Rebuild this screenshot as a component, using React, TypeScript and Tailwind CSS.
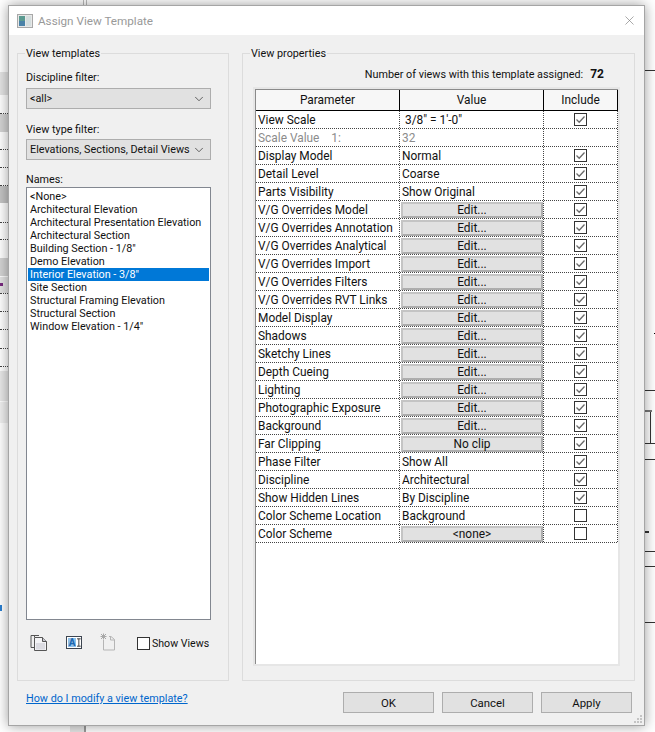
import { ChevronDown, X } from "lucide-react";

const templates = [
  "<None>",
  "Architectural Elevation",
  "Architectural Presentation Elevation",
  "Architectural Section",
  'Building Section - 1/8"',
  "Demo Elevation",
  'Interior Elevation - 3/8"',
  "Site Section",
  "Structural Framing Elevation",
  "Structural Section",
  'Window Elevation - 1/4"',
];

type Row = { name: string; value: string; kind?: "button" | "muted"; on?: boolean; noBox?: boolean };

const rows: Row[] = [
  { name: "View Scale", value: " 3/8\" = 1'-0\"", on: true },
  { name: "Scale Value    1:", value: "32", kind: "muted", noBox: true },
  { name: "Display Model", value: "Normal", on: true },
  { name: "Detail Level", value: "Coarse", on: true },
  { name: "Parts Visibility", value: "Show Original", on: true },
  { name: "V/G Overrides Model", value: "Edit...", kind: "button", on: true },
  { name: "V/G Overrides Annotation", value: "Edit...", kind: "button", on: true },
  { name: "V/G Overrides Analytical", value: "Edit...", kind: "button", on: true },
  { name: "V/G Overrides Import", value: "Edit...", kind: "button", on: true },
  { name: "V/G Overrides Filters", value: "Edit...", kind: "button", on: true },
  { name: "V/G Overrides RVT Links", value: "Edit...", kind: "button", on: true },
  { name: "Model Display", value: "Edit...", kind: "button", on: true },
  { name: "Shadows", value: "Edit...", kind: "button", on: true },
  { name: "Sketchy Lines", value: "Edit...", kind: "button", on: true },
  { name: "Depth Cueing", value: "Edit...", kind: "button", on: true },
  { name: "Lighting", value: "Edit...", kind: "button", on: true },
  { name: "Photographic Exposure", value: "Edit...", kind: "button", on: true },
  { name: "Background", value: "Edit...", kind: "button", on: true },
  { name: "Far Clipping", value: "No clip", kind: "button", on: true },
  { name: "Phase Filter", value: "Show All", on: true },
  { name: "Discipline", value: "Architectural", on: true },
  { name: "Show Hidden Lines", value: "By Discipline", on: true },
  { name: "Color Scheme Location", value: "Background", on: false },
  { name: "Color Scheme", value: "<none>", kind: "button", on: false },
];

const leftBands = [
  { top: 72, h: 23, cls: "bg-[#e4e4e4]" },
  { top: 114, h: 18, cls: "bg-[#d4d4d4]" },
  { top: 186, h: 17, cls: "bg-[#c4c4c4]" },
  { top: 258, h: 18, cls: "bg-[#d4d4d4]" },
  { top: 277, h: 16, cls: "bg-[#e4e4e4]" },
  { top: 371, h: 30, cls: "bg-[#e8e8e8]" },
  { top: 402, h: 21, cls: "bg-[#f0f0f0]" },
];
const leftDots = [113, 149, 167, 185, 222, 239, 293, 311, 329, 348, 366];
const rightLines = [70, 390, 443, 459, 551, 566, 622];

const CheckBox = ({ on }: { on?: boolean }) => (
  <span className="w-[13px] h-[13px] border border-[#333333] bg-white flex items-center justify-center">
    {on && (
      <svg width="11" height="11" viewBox="0 0 11 11" fill="none">
        <path d="M1.5 5.5 L4.2 8.2 L9.5 2.5" stroke="#6a6a6a" strokeWidth="1.3" />
      </svg>
    )}
  </span>
);

const Combo = ({ label }: { label: string }) => (
  <div className="w-[185px] h-[21px] bg-[#e1e1e1] border border-[#adadad] flex items-center justify-between pl-[3px] pr-[4px] whitespace-nowrap">
    <span>{label}</span>
    <ChevronDown size={14} strokeWidth={1.4} className="text-[#444444] shrink-0" />
  </div>
);

const TitleIcon = () => (
  <svg width="16" height="14" viewBox="0 0 16 14">
    <rect x="0.5" y="0.5" width="15" height="13" fill="#e8e8e8" stroke="#a8a8a8" />
    <rect x="2" y="2" width="6" height="10" fill="#5a9a90" />
    <rect x="2" y="7" width="6" height="5" fill="#4a82a8" />
    <rect x="9" y="2" width="5" height="10" fill="#d4dede" />
  </svg>
);

const CopyIcon = () => (
  <svg width="18" height="17" viewBox="0 0 18 17" fill="none">
    <path d="M5 1.5 H1 V13.5 H4" stroke="#555555" />
    <path d="M5 1.5 H9 M4.5 1 V3" stroke="#555555" />
    <path d="M4.5 3.5 H12.5 L16.5 7.5 V16.5 H4.5 Z" fill="#f4f4f6" stroke="#555555" />
    <path d="M12.5 3.5 V7.5 H16.5" fill="#c8c8d0" stroke="#555555" />
    <rect x="6" y="9" width="9" height="6.5" fill="#dcdce2" />
  </svg>
);

const RenameIcon = () => (
  <span className="w-[16px] h-[13px] border border-[#3c4450] bg-white flex items-stretch pl-px py-px">
    <span className="w-[9px] bg-[#8fc0e8] text-[#1c66b0] font-bold text-[10px] leading-[10px] text-center">A</span>
    <svg width="4" height="9" viewBox="0 0 4 9" className="ml-px" fill="none">
      <path d="M0 .5 H4 M2 .5 V8.5 M0 8.5 H4" stroke="#333333" />
    </svg>
  </span>
);

const DeleteIcon = () => (
  <svg width="16" height="18" viewBox="0 0 16 18" fill="none">
    <path d="M3.5 7 V17 H14.5 V6.5 L11 3.5 H9" stroke="#b5b5b5" />
    <path d="M10.5 3.5 V7 H14.5" stroke="#b5b5b5" />
    <path d="M1 1 L6 6 M6 1 L1 6 M3.5 0.5 V6.5 M0.5 3.5 H6.5" stroke="#a8a8a8" strokeWidth="1" />
  </svg>
);

const DialogButton = ({ label }: { label: string }) => (
  <button className="w-[91px] h-[21px] bg-[#e1e1e1] border border-[#adadad] flex items-center justify-center pt-px text-[11.4px]">
    {label}
  </button>
);

export default function App() {
  return (
    <div className="relative w-[655px] h-[732px] overflow-hidden bg-white pt-[5px] pl-[8px] text-[10.8px] leading-[13px] text-[#111111] font-['Roboto',sans-serif]">
      {/* revit drawing behind the dialog */}
      {leftBands.map((b) => (
        <div key={b.top} className={`absolute left-0 w-[8px] ${b.cls}`} style={{ top: b.top, height: b.h }} />
      ))}
      {leftDots.map((y) => (
        <div key={y} className="absolute left-0 w-[8px] border-t border-dotted border-[#444444]" style={{ top: y }} />
      ))}
      <div className="absolute left-0 top-[283px] w-[3px] h-[3px] bg-[#7a2a80]" />
      <div className="absolute left-0 top-[605px] w-[2px] h-[6px] bg-[#2a7fd0]" />
      {rightLines.map((y) => (
        <div key={y} className="absolute left-[645px] right-0 border-t border-[#333333]" style={{ top: y }} />
      ))}
      <div className="absolute left-[654px] top-[333px] w-px h-px bg-black" />
      <div className="absolute left-[645px] top-[410px] w-[7px] h-[2px] border border-[#777777]" />
      <div className="absolute left-[650px] top-[412px] w-px h-[31px] bg-[#333333]" />
      <div className="absolute left-[645px] top-[531px] w-[4px] h-[2px] bg-[#333333]" />
      <div className="absolute left-[83px] top-0 w-[4px] h-[6px] border-x border-[#bbbbbb]" />
      <div className="absolute left-[70px] top-[725px] w-[16px] h-[7px] bg-[#e6e6e6] border-r-2 border-[#9a9a9a]" />

      {/* dialog */}
      <div className="relative w-[637px] h-[721px] border border-[#a5a5a5] bg-[#f0f0f0] shadow-[0_0_12px_rgba(0,0,0,0.4)] flex flex-col">
        <div className="h-[29px] bg-white flex items-center pl-[8px] pr-[7px] shrink-0 text-[#999999] text-[11.7px]">
          <TitleIcon />
          <span className="ml-[5px] flex-1 pt-[2px]">Assign View Template</span>
          <X size={15} strokeWidth={1} className="text-[#777777]" />
        </div>

        <div className="flex pl-[8px] pt-[11px] gap-[13px]">
          {/* left group */}
          <fieldset className="w-[212px] h-[635px] border border-[#dcdcdc] pl-[8px]">
            <legend className="px-px -ml-[1px] pt-px">View templates</legend>
            <div className="mt-[11px]">Discipline filter:</div>
            <div className="mt-[4px]"><Combo label="<all>" /></div>
            <div className="mt-[14px]">View type filter:</div>
            <div className="mt-[3px]"><Combo label="Elevations, Sections, Detail Views" /></div>
            <div className="mt-[13px]">Names:</div>
            <div className="mt-[1px] w-[185px] h-[433px] border border-[#828790] bg-white px-px pt-[2px] flex flex-col">
              {templates.map((t, i) => (
                <div
                  key={t}
                  className={`h-[13px] pl-[2px] whitespace-nowrap ${i === 6 ? "bg-[#0078d7] text-white" : ""}`}
                >
                  {t}
                </div>
              ))}
            </div>
            <div className="mt-[13px] flex items-center">
              <span className="ml-[4px]"><CopyIcon /></span>
              <span className="ml-[18px]"><RenameIcon /></span>
              <span className="ml-[18px]"><DeleteIcon /></span>
              <span className="ml-[21px] mt-[2px] w-[13px] h-[13px] border border-[#333333] bg-white" />
              <span className="ml-[2px] mt-[2px] text-[10.6px]">Show Views</span>
            </div>
          </fieldset>

          {/* right group */}
          <fieldset className="w-[393px] h-[635px] border border-[#dcdcdc] pl-[11px]">
            <legend className="px-px -ml-[4px] pt-px">View properties</legend>
            <div className="mt-[7px] pr-[30px] flex justify-end items-center h-[14px] pt-px">
              <span>Number of views with this template assigned:</span>
              <span className="ml-[7px] font-bold text-[12px]">72</span>
            </div>
            <div className="mt-[7px] w-[365px] h-[577px] bg-white border-l-2 border-t-2 border-[#8a8a8a] outline-2 outline-[#e6e6e6] -outline-offset-1 text-[11.9px]">
              <div className="grid grid-cols-[144px_144px_74px] h-[21px] bg-[#f7f7f7] border-b border-black text-center">
                <div className="border-r border-black flex items-center justify-center pt-px">Parameter</div>
                <div className="border-r border-black flex items-center justify-center pt-px">Value</div>
                <div className="border-r border-black flex items-center justify-center pt-px">Include</div>
              </div>
              {rows.map((r) => (
                <div
                  key={r.name}
                  className={`grid grid-cols-[144px_144px_74px] h-[18px] border-b border-dotted border-[#444444] ${r.kind === "muted" ? "text-[#8c8c8c]" : ""}`}
                >
                  <div className="border-r border-dotted border-[#444444] pl-[2px] pt-px flex items-center whitespace-pre">{r.name}</div>
                  <div className="border-r border-dotted border-[#444444] flex items-center whitespace-pre">
                    {r.kind === "button" ? (
                      <span className="w-[142px] h-[16px] ml-px bg-[#e1e1e1] border-2 border-[#adadad] border-t-[#c4c4c4] border-l-[#c4c4c4] flex items-center justify-center pt-px">
                        {r.value}
                      </span>
                    ) : (
                      <span className="pl-[2px] pt-px">{r.value}</span>
                    )}
                  </div>
                  <div className="border-r border-dotted border-[#444444] flex items-center justify-center pr-px">
                    {!r.noBox && <CheckBox on={r.on} />}
                  </div>
                </div>
              ))}
            </div>
          </fieldset>
        </div>

        {/* footer */}
        <div className="flex items-center pl-[17px] pr-[12px] mt-[11px] h-[21px]">
          <a className="text-[#0066cc] underline flex-1 whitespace-nowrap -mt-[8px]">How do I modify a view template?</a>
          <div className="flex gap-[8px]">
            <DialogButton label="OK" />
            <DialogButton label="Cancel" />
            <DialogButton label="Apply" />
          </div>
        </div>

        {/* resize grip */}
        <svg width="9" height="9" viewBox="0 0 9 9" className="absolute right-[2px] bottom-[2px]">
          <path d="M7 1h2v2H7zM4 4h2v2H4zM7 4h2v2H7zM1 7h2v2H1zM4 7h2v2H4zM7 7h2v2H7z" fill="#c4c4c4" />
        </svg>
      </div>
    </div>
  );
}
